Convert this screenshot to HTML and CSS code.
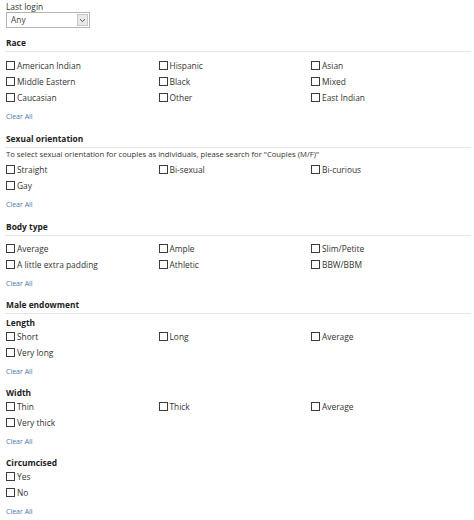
FILE: index.html
```html
<!DOCTYPE html>
<html>
<head>
<meta charset="utf-8">
<link rel="stylesheet" href="styles.css">
</head>
<body>
<div class="page">
  <div class="field-label">Last login</div>
  <div class="select">
    <span class="select-value">Any</span>
    <span class="select-btn"><svg width="7" height="5" viewBox="0 0 7 5"><path d="M1 1.2 L3.5 3.6 L6 1.2" fill="none" stroke="#555" stroke-width="1"/></svg></span>
  </div>

  <section class="section">
    <h2 class="heading">Race</h2>
    <div class="options">
      <label class="opt"><span class="box"></span>American Indian</label>
      <label class="opt"><span class="box"></span>Hispanic</label>
      <label class="opt"><span class="box"></span>Asian</label>
      <label class="opt"><span class="box"></span>Middle Eastern</label>
      <label class="opt"><span class="box"></span>Black</label>
      <label class="opt"><span class="box"></span>Mixed</label>
      <label class="opt"><span class="box"></span>Caucasian</label>
      <label class="opt"><span class="box"></span>Other</label>
      <label class="opt"><span class="box"></span>East Indian</label>
    </div>
    <a class="clear">Clear All</a>
  </section>

  <section class="section">
    <h2 class="heading">Sexual orientation</h2>
    <p class="desc">To select sexual orientation for couples as individuals, please search for "Couples (M/F)"</p>
    <div class="options">
      <label class="opt"><span class="box"></span>Straight</label>
      <label class="opt"><span class="box"></span>Bi-sexual</label>
      <label class="opt"><span class="box"></span>Bi-curious</label>
      <label class="opt"><span class="box"></span>Gay</label>
    </div>
    <a class="clear">Clear All</a>
  </section>

  <section class="section">
    <h2 class="heading">Body type</h2>
    <div class="options compact">
      <label class="opt"><span class="box"></span>Average</label>
      <label class="opt"><span class="box"></span>Ample</label>
      <label class="opt"><span class="box"></span>Slim/Petite</label>
      <label class="opt"><span class="box"></span>A little extra padding</label>
      <label class="opt"><span class="box"></span>Athletic</label>
      <label class="opt"><span class="box"></span>BBW/BBM</label>
    </div>
    <a class="clear">Clear All</a>
  </section>

  <section class="section nested">
    <h2 class="heading">Male endowment</h2>
    <div class="sub first">
      <h3 class="subheading">Length</h3>
      <div class="options tight">
        <label class="opt"><span class="box"></span>Short</label>
        <label class="opt"><span class="box"></span>Long</label>
        <label class="opt"><span class="box"></span>Average</label>
        <label class="opt"><span class="box"></span>Very long</label>
      </div>
      <a class="clear">Clear All</a>
    </div>
    <div class="sub">
      <h3 class="subheading">Width</h3>
      <div class="options tight">
        <label class="opt"><span class="box"></span>Thin</label>
        <label class="opt"><span class="box"></span>Thick</label>
        <label class="opt"><span class="box"></span>Average</label>
        <label class="opt"><span class="box"></span>Very thick</label>
      </div>
      <a class="clear">Clear All</a>
    </div>
    <div class="sub">
      <h3 class="subheading">Circumcised</h3>
      <div class="options tight single">
        <label class="opt"><span class="box"></span>Yes</label>
        <label class="opt"><span class="box"></span>No</label>
      </div>
      <a class="clear">Clear All</a>
    </div>
  </section>
</div>
</body>
</html>
```

FILE: styles.css
```css
* { box-sizing: border-box; }
html, body { margin: 0; padding: 0; background: #fff; }
body {
  font-family: "Open Sans", "Liberation Sans", sans-serif;
  font-size: 8.4px;
  color: #333;
}
.page { padding: 2px 3px 0 6px; }

.field-label { line-height: 10px; height: 10px; color: #333; }

.select {
  display: flex;
  width: 84px;
  height: 16px;
  border: 1px solid #b4b4b4;
  background: #fff;
  align-items: stretch;
}
.select-value { flex: 1; padding-left: 4px; line-height: 14px; color: #444; }
.select-btn {
  width: 11px;
  margin: 1px;
  background: #e9e9e9;
  border: 1px solid #c6c6c6;
  display: flex;
  align-items: center;
  justify-content: center;
}

.section { margin-top: 9px; }
.section + .section { margin-top: 10px; }
.section.nested { margin-top: 9px; }

.heading {
  margin: 0;
  font-size: 8.4px;
  font-weight: 700;
  color: #222;
  line-height: 12px;
  padding-bottom: 2px;
  border-bottom: 1px solid #e6e6e6;
  margin-left: -1px;
  padding-left: 1px;
}

.desc { margin: 0; line-height: 12px; font-size: 7.7px; color: #333; }

.options {
  display: grid;
  grid-template-columns: repeat(3, 152.5px);
  margin-top: 5px;
}
.options.compact { margin-top: 4px; }
.heading + .desc + .options { margin-top: 1px; }
.options.tight { margin-top: 0; }
.options.single { grid-template-columns: 152.5px; }

.opt {
  display: flex;
  align-items: center;
  height: 16px;
  white-space: nowrap;
  color: #333;
}
.box {
  width: 9px;
  height: 9px;
  border: 1px solid #3c3c3c;
  background: #fff;
  margin-right: 2px;
  flex: none;
}

.clear {
  display: block;
  margin-top: 6px;
  line-height: 12px;
  font-size: 7px;
  color: #4a77ad;
  text-decoration: none;
}

.sub { margin-top: 10px; }
.sub.first { margin-top: 4px; }
.subheading {
  margin: 0;
  font-size: 8.4px;
  font-weight: 700;
  color: #222;
  line-height: 10px;
}
```
